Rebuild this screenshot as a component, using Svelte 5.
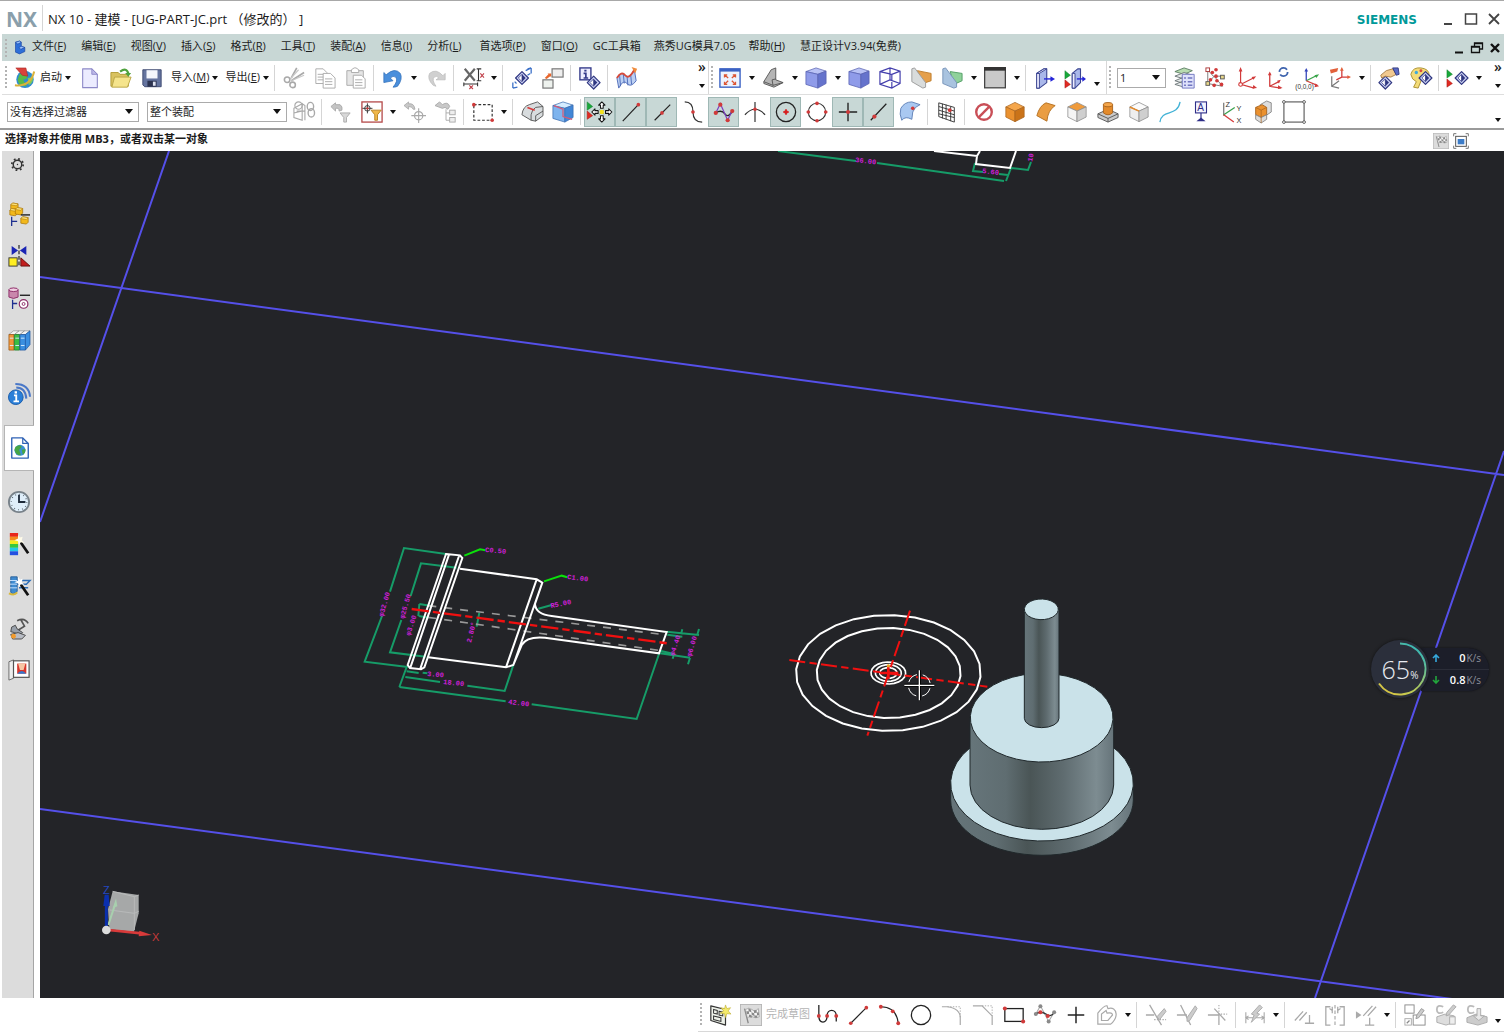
<script>
  const G = '#a9a9a9';
  const line = (d, c = '#333', w = 1.3, extra = '') =>
    `<path d="${d}" fill="none" stroke="${c}" stroke-width="${w}" ${extra}/>`;
  const fill = (d, f, s = 'none', w = 1) => `<path d="${d}" fill="${f}" stroke="${s}" stroke-width="${w}" stroke-linejoin="round"/>`;
  const dot = (x, y, r = 2, c = '#d03a3a') => `<circle cx="${x}" cy="${y}" r="${r}" fill="${c}"/>`;
  const dots = (list, r = 2, c = '#d03a3a') => list.map(([x, y]) => dot(x, y, r, c)).join('');
  const iso = (t, l, r, s) =>
    fill('M12 1.500 22 6.500 12 11 2 6.500z', t, s, 0.8) + fill('M2 6.500 12 11v11.500l-10-5z', l, s, 0.8) + fill('M22 6.500 12 11v11.500l10-5z', r, s, 0.8);
  const block = (t, l, r, s) =>
    fill('M1 5 12 1l11 3.500L14 8z', t, s, 0.8) + fill('M1 5l13 3v15L1 19z', l, s, 0.8) + fill('M14 8l9-3.500V18l-9 5z', r, s, 0.8);
  const diamond = (x, y, c = '#2f3680') =>
    fill(`M${x} ${y - 7}l7 7-7 7-7-7z`, '#c9cff2', c, 1.3) + fill(`M${x} ${y - 4}v8l-4-4z`, '#fff', c, 0.8) + fill(`M${x} ${y - 4}v8l4-4z`, c);
  const play = (x, y) => fill(`M${x} ${y}l6 5-6 4z`, '#19a83a', '#0b7a25', 0.5) + fill(`M${x} ${y + 10}l6 5-6 4z`, '#e02a22', '#a01010', 0.5);
  const flag = '<rect x=".5" y=".5" width="23" height="23" fill="#dcdcdc" stroke="#b5b5b5"/>' +
    line('M5 5l4 16', '#888', 1.4) + fill('M6 6q4-3 7 0t7-1l1 9q-4 2-7 0t-6 1z', '#f6f6f6', '#999', 0.8) +
    fill('M9 5l3 1 .5 3-3-1zM15 7l3-.5.4 3-3 .3zM7 8l2.500-.4.6 3-2.500.6zM12.500 9l3 1 .3 3-3-1zM18.400 9.400l2-.5.4 3-2.200.6zM9.500 11.500l3 .5.5 3-3-.5zM15.500 12.500l3 0 .5 2.500-3 0z', '#888');
  const axes = (c = '#d23b3b') =>
    line('M5 3v16l15 4M5 19l14-7', c, 1.3) + fill('M5 0l2 5H3zM23 23l-5 .5 1-4zM22 10l-3 4-2-3z', c);

  const icons = {
    part: fill('M6 3l7-2 3 2v7l6 2v7l-9 4-7-3z', '#2e6fd8', '#123c9a') + fill('M6 3l7-2 3 2-6 3zM12 12l4-2 6 2-7 3z', '#9cc4ff', '#123c9a'),
    launch: '<circle cx="12" cy="13.500" r="9.500" fill="#2f8bd0"/>' + fill('M6 8q6-3 8 1t-4 5l4 7q-9 1-10-7z', '#57b948') + fill('M15 12l6-1q0 7-5 9z', '#7dc95a') +
      line('M1 20Q18 22 22 5', '#d9b23c', 2.2) + fill('M2 1l11 0 2 9L9 9z', '#d8413b', '#a82220', 0.6),
    new: fill('M4 2h10l6 6v14.500H4z', '#ececff', '#8d89c8', 1.2) + fill('M14 2v6h6z', '#bdb9e8', '#8d89c8'),
    open: fill('M1 6h8l2 2h9v13H1z', '#d9c260', '#b09a35') + fill('M5 11h18l-4 11H2z', '#f5e48c', '#b9a545') + line('M11 5q7-5 9 2', '#4fa23e', 2.4) + fill('M16.500 6.500h6.500l-3 4z', '#4fa23e'),
    save: fill('M2 3h20v18.500H4l-2-2z', '#65749f', '#3b466e') + '<rect x="6" y="3.500" width="12" height="9" fill="#f4f6fc"/><rect x="7" y="15" width="10" height="6.500" fill="#2c3350"/><rect x="13" y="16" width="3" height="4.500" fill="#dfe3f2"/>',
    cut: line('M9 15 23 6M9 12 15 1', G, 1.8) + line('M9 15 23 9M8 13 17 3', '#c9c9c9', 1.4) + `<circle cx="4.500" cy="14" r="3" fill="none" stroke="${G}" stroke-width="1.700"/><circle cx="10.500" cy="19.500" r="3" fill="none" stroke="${G}" stroke-width="1.700"/>`,
    copy: fill('M2 2h8l4 4v12H2z', '#fff', G) + line('M4 8h7M4 11h7M4 14h7', G, 1) + fill('M10 7h8l5 5v11H10z', '#fff', G) + line('M12 13h8M12 16h8M12 19h8', G, 1),
    paste: fill('M2 4h18v16H2z', '#e6e6e6', G) + fill('M7 6V3l3-2h2l3 2v3z', '#fff', G) + fill('M9 9h9l4 4v10H9z', '#fff', G) + line('M11 14h8M11 17h8M11 20h8', G, 1),
    undo: fill('M2 6l2.500 2.500Q14 0 20 7q3 6-3 14-2 1-5 1 6-7 3-11-3-2-6 1l3 3L2 17z', '#4a8fdc', '#2e6db8', 0.8),
    redo: fill('M22 7l-2.500 2.500Q12 1 5 7q-3 6 4 13l3 1q-5-7-2-10 3-2 5 1l-3 2h10z', '#d0d0d0', '#bbb', 0.8),
    expr: line('M3 2l11 13M14 2 3 15', '#666', 2.4) + line('M2 17v4M17 17v4M2 18.500h15M18 2v13M16 2h5M16 15h5', '#333', 1.2) + line('M20 7l4 4.500M24 7l-4 4.500M8 20l4 4M12 20l-4 4', '#c0404a', 1.2),
    rotate: diamond(12, 12) + line('M16 4l6-3M22 1v6M22 1l-4 1M2 23v-6M2 23l5-1M18 9l3-2M4 16l2 2', '#3b70c8', 1.4),
    boxes: '<rect x="11" y="2" width="12" height="9" fill="#eee" stroke="#777" stroke-width="1.300"/><rect x="1" y="14" width="11" height="9" fill="#eef2ee" stroke="#777" stroke-width="1.300"/>' + fill('M3 12l4-4-1-1h4v4l-1-1-4 3z', '#e8662c'),
    info: '<rect x="1" y="1" width="12" height="13" fill="#eef" stroke="#343a8a" stroke-width="1.500"/>' + line('M7 3v2', '#343a8a', 2.4) + line('M5 7h2.500v5M5 12h5', '#343a8a', 1.8) + diamond(16, 17),
    spring: fill('M1 12q5-8 9-3t10-6l2 12q-6 8-10 3t-9 5z', '#bcd0f3', '#4b69b8') + line('M4 10l1 11M8 8l1 10M12 10l1 10M16 8l1 11', '#4b69b8', 1) + line('M1 12q5-8 9-3t10-6', '#d64a3a', 2) + fill('M17 0l6 2-2 5z', '#ef8c3d'),
    fit: '<rect x="1" y="2" width="22" height="20" fill="#eef3ff" stroke="#3b62c4" stroke-width="1.500"/><rect x="1" y="2" width="22" height="3" fill="#3b62c4"/>' + line('M10 12 6 8.500m0 3v-3h3M14 12l4-3.500m-3 0h3v3M10 15l-4 4m0-3v3h3M14 15l4 4m-3 0h3v-3', '#dd5533', 1.4),
    clipv: fill('M2 16 10 3l5-2v13l8 3-10 5-11-4z', '#b5b5b5', '#555') + line('M2 16l10 4 11-3M12 20l-1-6 4-1', '#555', 1),
    blue: block('#b9c2f5', '#8f9be9', '#6573cc', '#5660b0'),
    wire: line('M1 5 12 1l11 3.500V18l-9 5L1 19zM1 5l13 3v15M14 8l9-3.500M12 1v13L1 19M12 14l11 4', '#4540ad', 1.3),
    plane1: fill('M8 4l15 3v8l-12 4z', '#e5a04c', '#bd7b28') + fill('M2 2l3-1 12 16v5l-3 1L2 16z', '#d9dcdc', '#999'),
    plane2: fill('M10 5l13 2v8l-9 4z', '#8fd19a', '#4f9c63') + fill('M2 2l3-1 12 16v5l-3 1L2 18z', '#a9c3df', '#7592b8'),
    screen: '<rect x=".7" y="1.700" width="22.600" height="21" fill="#c9c9c9" stroke="#444" stroke-width="1.400"/><rect x="0" y="0" width="24" height="4" fill="#333"/>',
    slide: fill('M4 7 12 2h3v15l-8 6H4z', '#aab8ea', '#3a4490', 1.2) + fill('M4 7h3v16H4zM4 7l8-5h3L7 7z', '#eef', '#3a4490', 1) + line('M12 13h8', '#2424d8', 1.5) + fill('M19 10l5 3-5 3z', '#2424d8'),
    slidep: fill('M9 7 15 2h3v15l-6 6H9z', '#aab8ea', '#3a4490', 1.2) + fill('M9 7h3v16H9z', '#eef', '#3a4490', 1) + line('M14 13h7', '#2424d8', 1.5) + fill('M20 10l4 3-4 3z', '#2424d8') + play(1, 4),
    layers: fill('M1 5l10-4 9 3-9 4z', '#b8dcb0', '#5b7d63') + fill('M1 10l10-4 9 3-9 4zM1 15l10-4 9 3-9 4zM1 19l10-4 9 3-9 4z', '#e6eaea', '#6c7678') + fill('M9 8h13v15H9z', '#dfe2fb', '#6f74c0') + line('M11 12h2M15 12h5M11 16h2M15 16h5M11 20h2M15 20h5', '#6f74c0', 1.6),
    molec: line('M3 3v15l16 3M3 3l6 7 9 0M3 18l7-8 9 11', '#777', 1) + dots([[8, 6], [12, 10], [6, 14], [13, 15], [18, 19], [10, 20], [12, 3]], 2) + '<rect x="1" y="1" width="4" height="4" fill="#fff" stroke="#a33"/><rect x="1" y="16" width="4" height="4" fill="#e9d88a" stroke="#555"/><rect x="17" y="9" width="4" height="4" fill="#e9d88a" stroke="#555"/>',
    csys: axes() + '<circle cx="5" cy="19" r="2" fill="#fff" stroke="#d23b3b" stroke-width="1.200"/>',
    csysr: line('M3 7v14l12 2M3 21l10-5', '#d23b3b', 1.4) + fill('M3 5l2 4H1zM17 23l-5 1v-4zM15 14l-2 4-2-3z', '#d23b3b') + '<circle cx="18" cy="5.500" r="4.500" fill="none" stroke="#3c62ad" stroke-width="2" stroke-dasharray="11 3"/>',
    csyso: line('M9 4v11', '#3344bb', 1.4) + line('M9 15l12-6', '#3aa44a', 1.4) + line('M9 15l12 5', '#d23b3b', 1.4) + fill('M9 1l2 4H7z', '#3344bb') + fill('M23 8l-3 4-2-3z', '#3aa44a') + fill('M23 21l-5 1 1-4z', '#d23b3b') + '<text x="-3" y="24" font-size="7" font-family="Liberation Sans, sans-serif" fill="#333">(0,0,0)</text>',
    csysd: line('M14 3v8l8 0M14 11l-6 3', '#d23b3b', 1.4) + fill('M14 0l2 4h-4zM24 11l-4 2V9zM1 3l9-2-1 4-7 2z', '#e2603a') + line('M3 10v11l8 2M3 21l8-6', '#777', 1.3),
    hand: diamond(8, 17) + fill('M3 9l6-5 7-2 4 6-6 3-6-1-4 2z', '#f1c98f', '#a57c45') + fill('M16 1l6 0 1 7-3 1z', '#5a6bc5', '#333a80'),
    palette: fill('M2 8q2-8 11-7t9 8q-2 5-8 4l-4 10-5-1 3-6-4-3z', '#f4dc78', '#a88d2f') + dot(8, 6, 1.8, '#3fa9dd') + dot(13, 4, 1.6, '#d94c3c') + diamond(18, 12),
    playd: play(1, 3) + diamond(17, 12),
    wcs: line('M1 8l9-5v18l-9-3zM1 13l9-2M10 3l3 2v16M13 11h-9', G, 1.2) + `<circle cx="6" cy="5" r="4" fill="none" stroke="${G}" stroke-width="1.200"/><ellipse cx="19" cy="6" rx="3.500" ry="4.500" fill="none" stroke="${G}" stroke-width="1.500"/><ellipse cx="20" cy="13" rx="3.500" ry="4.500" fill="none" stroke="${G}" stroke-width="1.500"/>`,
    filt1: fill('M1 6l5-4v2h5q3 2 2 6l-3 1q0-4-4-3v3z', '#c4c4c4', '#aaa') + fill('M11 13h11l-4 5v5h-3v-5z', '#d8d8d8', '#aaa'),
    filt2: '<rect x="1" y="1" width="22" height="22" fill="#fff" stroke="#b34646" stroke-width="1.400"/><circle cx="7" cy="8" r="3" fill="none" stroke="#333"/>' + line('M7 2.500v11M1.500 8h11', '#333', 1) + dot(7, 8, 1.3) + fill('M11 10h11l-4 5v6h-3v-6z', '#f0b84a', '#b98120'),
    filt3: fill('M0 5l5-4v2q6-1 7 6h-2q-1-3-5-3v3z', '#c8c8c8', '#999', 0.7) + `<circle cx="16" cy="16" r="4.500" fill="none" stroke="${G}" stroke-width="1.300"/>` + line('M16 8v16M8 16h16', G, 1.2),
    filt4: fill('M0 5l5-4 3 3q6-4 8 2l-2 3-3-2-3 1z', '#c8c8c8', '#aaa') + '<rect x="16" y="10" width="6" height="5" fill="#eee" stroke="#aaa"/><rect x="16" y="18" width="6" height="5" fill="#eee" stroke="#aaa"/>' + line('M12 9v12h4M12 13h4', G, 1),
    rect: '<rect x="2" y="4" width="20" height="17" fill="none" stroke="#333" stroke-width="1.300" stroke-dasharray="3 2"/>' + dots([[2, 4], [22, 21]], 2),
    solid1: fill('M1 15Q2 6 9 4l9-3 6 5v10l-8 6-5-1z', '#d8dcde', '#555') + line('M11 21v-6q1-6 5-8l8-1M16 22v-6l8-5', '#555', 1) + line('M7 7l8 3', '#d63a3a', 1.8),
    solid2: block('#d5ecff', '#7eb4ee', '#4286d6', '#3a6cb0') + line('M2 5l10 4v8l10 3', '#d45a78', 1.4),
    move: play(-2, 1) + line('M11.500 9.500l5 5M16.500 9.500l-5 5', '#555', 1, 'stroke-dasharray="1 1"') +
      fill('M14 1l3.500 3.500h-2V8h-3V4.500h-2zM14 23l-3.500-3.500h2V16h3v3.500h2zM3 12l3.500-3.500v2H10v3H6.500v2zM25 12l-3.500-3.500v2H18v3h3.500v2z', '#fff', '#111', 1.1) + dot(14, 12, 2.4, '#f4e21c'),
    seg: line('M3 22 20 4', '#222', 1.3) + dot(20, 4),
    mid: line('M4 21 21 4', '#222', 1.3) + dot(12, 13),
    scurve: line('M3 1q9 0 9 11t10 11', '#333', 1.3) + dot(12, 12),
    spline: line('M3 13q6-4 10 1t8-3', '#222', 1.5) + line('M3 13 8 3l8 18 5-11', '#7c3fc0', 1.3) + dots([[3, 13], [8, 4], [16, 21], [21, 11]], 2.3),
    tang: line('M1 15q11-12 22 0M12 1v22', '#333', 1.3) + dot(12, 9),
    center: '<circle cx="12" cy="12" r="10.500" fill="none" stroke="#222" stroke-width="1.400"/>' + fill('M12 9l1 2 2 1-2 1-1 2-1-2-2-1 2-1z', '#d62020', '#d62020'),
    quad: '<circle cx="12" cy="12" r="9.500" fill="none" stroke="#333" stroke-width="1.200"/>' + dots([[12, 2.5], [12, 21.5], [2.5, 12], [21.5, 12]], 2),
    cross: line('M12 2v20M2 12h20', '#222', 1.5) + dot(12, 12, 2.2),
    oncurve: line('M3 21 20 3', '#222', 1.3) + dot(7, 17, 2.3),
    face: fill('M2 8Q6 1 14 1l9 3q-6 2-8 8l-1 8Q7 16 3 21q-3-7-1-13z', '#a9c8f1', '#5d7fb6') + dot(15, 8),
    grid: fill('M3 2l17 5v16L3 17z', '#fff', '#333') + line('M7 3v16M11 4v16M16 6v16M3 6l17 5M3 10l17 5M3 14l17 4', '#333', 1) + dot(15, 10),
    no: '<circle cx="12" cy="12" r="8.500" fill="#fff" stroke="#c94f57" stroke-width="2.600"/>' + line('M6.500 17.500l11-11', '#c94f57', 2.6),
    orange: iso('#f5a64b', '#ea912f', '#ca7319', '#a9641e'),
    sheet: fill('M2 16Q5 5 12 2l10 3q-8 5-9 17z', '#ea9d42', '#b47021'),
    otop: iso('#ef9b3c', '#f4f4f4', '#cfcfcf', '#888'),
    boss: fill('M1 14l11-5 11 5v4l-11 5-11-5z', '#c9c9c9', '#555') + line('M1 14l11 5 11-5M12 19v4', '#555', 1) + fill('M7 4v9q5 4 10 0V4z', '#e38a2b', '#a9641e') + '<ellipse cx="12" cy="4" rx="5" ry="2.300" fill="#f5a64b" stroke="#a9641e"/>',
    gray: iso('#fbfbfb', '#eee', '#cfcfcf', '#888') + line('M2 6.500 12 11', '#e38a2b', 1.6),
    curve: line('M1 23C3 8 20 18 23 1', '#42b2d6', 1.4),
    note: '<rect x="6" y="1" width="12" height="12" fill="#f4f4ff" stroke="#2e2e88" stroke-width="1.200"/><text x="8" y="11" font-size="11" font-family="Liberation Sans, sans-serif" fill="#2e2e88">A</text>' + line('M12 13v6', '#2e2e88', 1.3) + fill('M12 18l5 4H7z', '#2e2e88'),
    xyz: line('M3 2v14', '#666', 1.2) + line('M3 15l12-8', '#38a04c', 1.4) + line('M3 15l11 8', '#d63a3a', 1.4) + '<g font-family="Liberation Sans, sans-serif" font-size="8" fill="#333"><text x="5" y="7">Z</text><text x="17" y="11">Y</text><text x="17" y="24">X</text></g>',
    bodies: fill('M9 4l7-4 5 2v10l-6 4z', '#ddd', '#888') + fill('M4 7l7-3 5 3v8l-6 3-6-3z', '#ea912f', '#a9641e') + fill('M4 15l6 3 6-3v5l-6 4-6-4z', '#ddd', '#888') + line('M4 7l6 3 6-3M10 10v14', '#a9641e', 0.8),
    frame: '<rect x="1" y="1" width="22" height="22" fill="#fff" stroke="#555" stroke-width="1.200"/>' + [[1, 1], [23, 1], [1, 23], [23, 23]].map(([x, y]) => `<circle cx="${x}" cy="${y}" r="1.500" fill="#fff" stroke="#555"/>`).join(''),
    flag,
    fullscr: line('M5 1H1v4M19 1h4v4M5 23H1v-4M19 23h4v-4', '#777', 1.5) + '<rect x="4" y="5" width="16" height="15" fill="#fff" stroke="#555" stroke-width="1.500"/><rect x="7" y="9" width="10" height="8" fill="#3c7cc8"/>',
    gear: '<circle cx="12" cy="12" r="6" fill="none" stroke="#333" stroke-width="2"/><circle cx="12" cy="12" r="8" fill="none" stroke="#333" stroke-width="2.400" stroke-dasharray="2.500 3.780"/>' + dot(12, 12, 1, '#333'),
    asm: [[3, 2], [2, 8], [8, 7], [14, 17]].map(([x, y]) => fill(`M${x} ${y}l2-2 6 1v5l-2 2-6-1z`, '#f2b81c', '#a87508', 0.8) + fill(`M${x} ${y}l2-2 6 1-2 2z`, '#fde27a', '#a87508', 0.6)).join('') + line('M4 15v10M4 20h6', '#1e2f90', 1.4) + line('M14 13h10', '#111', 1.4),
    mirror: fill('M4 1l7 5-7 5zM20 1l-7 5 7 5z', '#1b25b4') + line('M12 0v24', '#222', 1.3, 'stroke-dasharray="4 2"') + '<rect x="1" y="14" width="9" height="9" fill="#ffee22" stroke="#333"/>' + fill('M14 14v9h10z', '#c21d1d', '#611', 1),
    hist: fill('M1 3q5-3 10 0v8q-5 3-10 0z', '#c987ac', '#8b2a66') + '<ellipse cx="6" cy="3" rx="5" ry="2" fill="#f1cfe2" stroke="#8b2a66"/>' + line('M13 9h11', '#111', 1.4) + line('M5 14v10M5 18h5', '#1e2f90', 1.4) + '<circle cx="17" cy="18.500" r="4.700" fill="#fff" stroke="#8b2a66" stroke-width="1.300"/><circle cx="17" cy="18.500" r="1.600" fill="none" stroke="#8b2a66"/>',
    books: fill('M6 2h18l-5 4H1z', '#f4f4f4', '#777', 0.6) + fill('M1 6h5.500v17H1z', '#f0943a', '#9a5a1a', 0.8) + fill('M7 6h5.500v17H7z', '#3bbd44', '#1b7a25', 0.8) + fill('M13 6h6l5-4v15l-5 6h-6z', '#3b8fe0', '#1d55a0', 0.8) + line('M19 6v17', '#1d55a0', 0.8) + line('M2 10h4M2 18h4M8 10h4M8 18h4M14 10h4M14 18h4', '#d8ecff', 1) + line('M7 6l5-4M13 6l5-4', '#777', 0.8),
    web: '<circle cx="8.500" cy="15.500" r="8" fill="#2a7fd8" stroke="#1559a8"/>' + line('M8.500 9v2.500', '#fff', 2.6) + line('M6.500 13.500h2.500v6M6 20h6', '#fff', 2) + line('M9 5q10 0 11 12M8 1q15 0 16 14', '#4a78c8', 2.2),
    page: fill('M3 1h12l6 6v16H3z', '#fff', '#2f62b5', 1.5) + line('M15 1v6h6', '#2f62b5', 1.3) + '<circle cx="12" cy="14.500" r="6" fill="#3a8fd0"/>' + fill('M7 11q5-4 7 0l-3 3 2 6q-6 0-7-6zM14 14l4-1q0 5-3 6z', '#46a544'),
    clock: '<circle cx="12" cy="12" r="11" fill="#dfeefa" stroke="#78828a" stroke-width="2"/><circle cx="12" cy="12" r="8.500" fill="none" stroke="#55606a" stroke-width="1.200" stroke-dasharray="1 3.450"/>' + line('M12 4v8h7', '#1d2a3a', 2),
    wand: [['#e8261c', 0], ['#f58a1c', 4], ['#f4ea22', 8], ['#39c83c', 12], ['#22c8e8', 16], ['#2450e0', 20]].map(([c, y]) => `<rect x="2" y="${y}" width="9" height="4.200" fill="${c}"/>`).join('') + line('M13 9l9 13', '#111', 3) + fill('M11 2l2 3 3-1-1 4 3 3-4-1-2 3-1-4-4-1 4-2z', '#fffbe8'),
    wand2: fill('M3 2h7v16q-4 4-7 1z', '#3f8bd0', '#2a5f98') + line('M2 6h8M2 10h8M2 14h8', '#cfe6ff', 1) + line('M10 6h14l-4 4H10M12 14h10', '#2f6fb8', 1.6) + line('M1 20q6 3 9-1', '#d8b93c', 2) + line('M13 9l9 13', '#111', 3) + fill('M11 2l2 3 3-1-1 4 3 3-4-1-2 3-1-4-4-1 4-2z', '#fff'),
    robot: line('M10 4q8-4 12 3M14 3l4 7-8 5', '#555', 1.8) + fill('M4 11l4-2 2 4 6 4-3 3-6-3-4-1z', '#98a0aa', '#444') + fill('M3 19l8-2 8 3-4 4H5z', '#b8bcc4', '#444') + dot(6, 21, 2.6, '#f29b2c'),
    roles: fill('M1 3l5-2v20l-5 2z', '#eee', '#666') + '<rect x="6" y="2" width="17" height="18" fill="#fff" stroke="#555" stroke-width="1.300"/><rect x="10" y="5" width="10" height="11" fill="#d8362c"/>' + fill('M11 5h8l-2 7h-4z', '#f6c6a4') + fill('M10 16q5-6 10 0z', '#3477cc'),
    sketch: fill('M2 2l16 4v17L2 18z', '#eef2ea', '#333', 1.3) + line('M5 6l4 1v4L5 10zM11 8l4 1v4l-4-1zM5 13l8 2v4l-8-2z', '#333', 1.1) + fill('M18 1l1.500 4 4-1-2.500 3.500 3 3.500-4.500-.5L18 15l-1-4.500-5-.5 4-2.500L13 4l4 1z', '#f4ea6a', '#b9a92c', 0.6),
    profile: line('M2 1v12c0 9 9 9 9 0 0-8 10-8 10 0v6', '#222', 1.4) + dots([[2, 13], [11, 13], [21, 13]], 2.1),
    line: line('M3 21 20 4', '#222', 1.3) + dots([[3, 21], [20, 4]]),
    arc: line('M2 3q17 0 19 18', '#222', 1.3) + dots([[2, 3], [15, 8], [21, 21]], 2.1),
    circle: '<circle cx="12" cy="12" r="10.500" fill="none" stroke="#222" stroke-width="1.400"/>',
    fillet: line('M1 3h6q14 2 14 12v8', G, 1.3) + line('M7 3h14v12', G, 1, 'stroke-dasharray="1.500 1.500"'),
    chamfer: line('M1 2h10l11 11v10', G, 1.3) + line('M11 2h11v11', G, 1, 'stroke-dasharray="1.500 1.500"'),
    rectsk: '<rect x="2" y="5" width="20" height="14" fill="none" stroke="#222" stroke-width="1.400"/>' + dots([[2, 5], [22, 19]], 2.2),
    poly: line('M2 11 7 2l9 17 6-10', G, 1.2) + line('M2 11q5-4 11 0t9-2', '#333', 1.4) + dots([[2, 11], [7, 2.5], [16, 19], [22, 9]], 2.2, '#8a8a8a') + dots([[7, 9], [15, 13]], 2.2),
    plus: line('M12 3v18M3 12h18', '#222', 1.6),
    offset: line('M2 22V10q7-9 10-8l1 3q8-2 9 6 0 6-6 11zM6 18v-7l5-4 1 3q6-1 6 2l-5 6z', G, 1.3),
    trim: line('M5 1l13 22M1 12h9', G, 1.4) + line('M10 17h13', G, 1.2, 'stroke-dasharray="1.500 1.500"') + fill('M21 5l2 3-7 9-3-3z', '#ccc', '#aaa'),
    extend: line('M1 12h11M5 1l11 22', G, 1.4) + fill('M21 2l2 3-8 13-3 1 0-4z', '#ccc', '#aaa'),
    corner: line('M1 12h12v11M8 5l12 13', G, 1.4) + line('M13 1v10h9', G, 1.2, 'stroke-dasharray="1.500 1.500"'),
    dim: line('M2 9v12M22 9v12M2 15h20M5 13l-3 2 3 2M19 13l3 2-3 2', G, 1.2) + fill('M17 1l3 3-6 6 3 1-9 9 3-8-3-1z', '#ccc', '#aaa'),
    para: line('M2 18 11 8M7 18l8-9M13 21h10M18 12v9', G, 1.4),
    sym: line('M7 3H2v20h5M17 3h5v20h-5M9 3v7M15 3v7M9 7l-3-2M15 7l3-2', G, 1.4) + line('M12 1v22', G, 1.3, 'stroke-dasharray="4 2"'),
    autoc: fill('M1 8l6 4-6 4z', '#aaa') + line('M9 13 19 2M14 13 23 3M11 23h10M16 15v8', G, 1.4),
    conv: '<rect x="1" y="1" width="10" height="9" fill="#fff" stroke="#888"/><rect x="10" y="12" width="13" height="11" fill="#fff" stroke="#888"/><rect x="1" y="16" width="7" height="7" fill="#fff" stroke="#aaa"/>' + fill('M19 5l3 2-6 8-3 1 1-4z', '#ccc', '#999') + line('M3 21l3-3', '#888'),
    upd1: line('M9 3q-7-3-7 3t7 3', '#bbb', 2) + fill('M2 14l9-3 10 2v7l-9 3-10-3z', '#ddd', '#aaa') + fill('M20 1l3 2-8 9-3 1 1-4z', '#ccc', '#aaa') + '<rect x="16" y="14" width="6" height="8" fill="#eee" stroke="#aaa"/>',
    upd2: line('M9 3q-7-3-7 3t7 3', '#bbb', 2) + fill('M1 15l10-4 12 3v6l-10 3-12-3z', '#ccc', '#aaa') + fill('M12 5h4v8h4l-6 5-6-5h4z', '#e8e8e8', '#aaa')
  };

  const menus = [
    ['文件', 'F'], ['编辑', 'E'], ['视图', 'V'], ['插入', 'S'], ['格式', 'R'], ['工具', 'T'], ['装配', 'A'], ['信息', 'I'],
    ['分析', 'L'], ['首选项', 'P', 'wide'], ['窗口', 'O'], ['GC工具箱'], ['燕秀UG模具7.05'], ['帮助', 'H'], ['慧正设计V3.94(免费)']
  ];
  const std = ['launch', { t: '启动' }, 'v', 'new', 'open', 'save', { t: '导入', k: 'M' }, 'v', { t: '导出', k: 'E' }, 'v', '|', 'cut', 'copy', 'paste', '|', 'undo', 'v', 'redo', '|', 'expr', 'v', '|', 'rotate', 'boxes', '|', 'info', '|', 'spring'];
  const view = ['fit', 'v', 'clipv', 'v', 'blue', 'v', 'blue', 'wire', 'plane1', 'plane2', 'v', 'screen', 'v', '|', 'slide', 'slidep'];
  const util = ['layers', 'molec', 'csys', 'csysr', 'csyso', 'csysd', 'v', '|', 'hand', 'palette', '|', 'playd', 'v'];
  const sel = ['wcs', '|', 'filt1', 'filt2', 'v', 'filt3', 'filt4', '|', 'rect', 'v', '|', 'solid1', 'solid2', '|', '*move', '*seg', '*mid', 'scurve', '*spline', 'tang', '*center', 'quad', '*cross', '*oncurve', 'face', '|', 'grid', '|', 'no', 'orange', 'sheet', 'otop', 'boss', 'gray', 'curve', 'note', 'xyz', 'bodies', 'frame'];
  const sk1 = ['sketch', 'flag', { t: '完成草图', off: true }, 'profile', 'line', 'arc', 'circle', 'fillet', 'chamfer', 'rectsk', 'poly', 'plus', 'offset', 'v', '|', 'trim', 'extend', 'corner', '|', 'dim', 'v', '|', 'para', 'sym', 'autoc', 'v', '|', 'conv', 'upd1', 'upd2'];
  const side = [['asm', 'mirror', 'hist', 'books'], ['web'], ['page'], ['clock', 'wand', 'wand2', 'robot', 'roles']];

  const ring = (cx, cy, rx, ry, n) =>
    Array.from({ length: n }, (_, i) => {
      const a = (2 * Math.PI * (i + 0.3)) / n;
      return `${(cx + rx * Math.cos(a)).toFixed(1)},${(cy + ry * Math.sin(a)).toFixed(1)}`;
    }).join(' ');

  const dims = [
    ['C0.50', 485, 552, 5], ['C1.00', 567, 579, 7], ['R5.00', 551, 608, -11], ['φ32.00', 383, 617, -74], ['φ25.50', 404, 619, -74],
    ['φ3.00', 410, 636, -72], ['2.80°', 471, 643, -76], ['3.00', 427, 676, 5], ['18.00', 443, 684, 6], ['42.00', 508, 704, 7],
    ['φ4.40', 674, 656, -72], ['φ6.00', 691, 657, -74], ['36.00', 855, 162, 7], ['5.60', 982, 173, 7], ['10', 1032, 162, -78]
  ];
</script>

{#snippet icon(name)}
  <svg class="ic" viewBox="0 0 24 24" aria-hidden="true">{@html icons[name]}</svg>
{/snippet}

{#snippet bar(items)}
  {#each items as it}
    {#if it === '|'}
      <span class="sep"></span>
    {:else if it === 'v'}
      <button class="drop" aria-label="更多"><i class="tri"></i></button>
    {:else if it.t}
      <button class="label" class:off={it.off} class:keyed={it.k}>{it.t}{#if it.k}(<u>{it.k}</u>){/if}</button>
    {:else}
      <button class="tool" class:on={it[0] === '*'} aria-label={it.replace('*', '')}>{@render icon(it.replace('*', ''))}</button>
    {/if}
  {/each}
{/snippet}

{#snippet overflow(both)}
  <button class="overflow" aria-label="工具条选项">{#if both}<span>»</span>{/if}<i class="tri"></i></button>
{/snippet}

{#snippet combo(label, value, cls)}
  <label class="combo {cls}">
    <select aria-label={label}><option>{value}</option></select>
    <i class="tri big"></i>
  </label>
{/snippet}

<div class="app">
  <header class="title">
    <span class="nx">NX</span>
    <h1>NX 10 - 建模 - [UG-PART-JC.prt （修改的） ]</h1>
    <span class="brand">SIEMENS</span>
    <div class="win">
      <button aria-label="最小化"><svg viewBox="0 0 14 14"><path d="M3 12h8" stroke="#444" stroke-width="2" /></svg></button>
      <button aria-label="最大化"><svg viewBox="0 0 14 14"><path d="M1.500 2h11v10h-11z" fill="none" stroke="#444" stroke-width="1.500" /></svg></button>
      <button aria-label="关闭"><svg viewBox="0 0 14 14"><path d="M2 2l10 10M12 2 2 12" stroke="#444" stroke-width="1.800" /></svg></button>
    </div>
  </header>

  <nav class="menu">
    <span class="grip"></span>
    <span class="particon">{@render icon('part')}</span>
    {#each menus as [t, k, c]}
      <button class={c} class:keyed={k}>{t}{#if k}(<u>{k}</u>){/if}</button>
    {/each}
    <div class="win small">
      <button aria-label="最小化窗口"><svg viewBox="0 0 14 14"><path d="M3 11.500h8" stroke="#111" stroke-width="2" /></svg></button>
      <button aria-label="还原窗口"><svg viewBox="0 0 14 14"><path d="M4.500 5V2h8v6h-3M1.500 5.500h8v6h-8zM4 2.500h9M1 6h9" fill="none" stroke="#111" stroke-width="1.300" /></svg></button>
      <button aria-label="关闭窗口"><svg viewBox="0 0 14 14"><path d="M3 3l8 8M11 3l-8 8" stroke="#111" stroke-width="2.400" /></svg></button>
    </div>
  </nav>

  <div class="row first">
    <div class="group std"><span class="grip"></span>{@render bar(std)}{@render overflow(true)}</div>
    <div class="group"><span class="grip"></span>{@render bar(view)}<button class="drop low" aria-label="工具条选项"><i class="tri"></i></button></div>
    <div class="group"><span class="grip"></span>{@render combo('工作图层', '1', 'layer')}{@render bar(util)}{@render overflow(true)}</div>
  </div>

  <div class="row second">
    {@render combo('类型过滤器', '没有选择过滤器', 'type')}
    {@render combo('选择范围', '整个装配', 'scope')}
    {@render bar(sel)}
    {@render overflow(false)}
  </div>

  <div class="status">
    <strong>选择对象并使用 MB3，或者双击某一对象</strong>
    <button aria-label="完成">{@render icon('flag')}</button>
    <button aria-label="全屏">{@render icon('fullscr')}</button>
  </div>

  <main>
    <aside>
      <button class="gear" aria-label="设置">{@render icon('gear')}</button>
      {#each side as set}
        <div class="set">
          {#each set as s}
            <button class:active={s === 'page'} aria-label={s}>{@render icon(s)}</button>
          {/each}
        </div>
      {/each}
    </aside>

    <section class="canvas">
      <svg class="scene" viewBox="40 151 1464 847" preserveAspectRatio="xMidYMid slice" role="img" aria-label="三维视图">
        <defs>
          <linearGradient id="side">
            <stop offset="0" stop-color="#66757a" /><stop offset=".25" stop-color="#5f6d71" /><stop offset=".42" stop-color="#4a5556" />
            <stop offset=".65" stop-color="#5f6c70" /><stop offset=".88" stop-color="#7d8c91" /><stop offset="1" stop-color="#66747a" />
          </linearGradient>
        </defs>
        <g stroke="#5550ea" stroke-width="2">
          <path d="M169 151 40 522M40 277l1464 198M1504 451l-189 547M40 809l1464 197" fill="none" />
        </g>

        <g fill="none" stroke="#169c68" stroke-width="2">
          <path d="M778 151l78 10M877 163l127 18M975 163l-2 8 10 1M999 174l9 1M1011 168l-5 13M1011 168l17 2 3-8" />
        </g>
        <path d="M934 151l43 5 3-5M977 156l-1 8 34 4 6-17" fill="none" stroke="#fff" stroke-width="2" />

        <g transform="translate(360 530) scale(.33333)" fill="none" stroke-width="6">
          <g stroke="#169c68">
            <path d="M258 72 132 54 90 185M66 258 14 395 143 411M290 113 183 100 152 198M124 270 90 367 197 380M178 222l36 6M176 258l30 5M178 222l-3 36" />
            <path d="M118 471 140 411M118 471 437 514M515 523 830 567 897 372M136 441 240 456M322 467 434 483 460 405M140 424l36 5M188 428l14 2" />
            <path d="M920 305l97 10M1017 297l-6 20M922 314l45 6M967 298l-4 15M900 362l42 10M900 370l90 13M990 383l-6 20M942 372l-4 14M358 248l-8 42M535 236l40-11" />
          </g>
          <g stroke="#999" stroke-width="5">
            <path d="M205 227 920 315" stroke-dasharray="24 24" />
            <path d="M205 262 895 361" stroke-dasharray="24 24" />
          </g>
          <g stroke="#fff">
            <path d="M258 72 300 76 307 84 193 412 183 418 150 414 143 405zM267 74 151 413M297 78 181 416" />
            <path d="M300 116 530 148 547 158 525 222Q527 253 575 258L920 306 897 370 555 323Q500 318 485 345L460 405 438 412 205 382M530 148 438 412M547 158 460 405" />
          </g>
          <path d="M155 237 930 341" stroke="#f01010" stroke-width="7" stroke-dasharray="52 12 22 12" />
          <path d="M313 77 360 58l16 3M552 154l53-17 17 5" stroke="#0be00b" />
        </g>

        <g transform="translate(780 590) scale(.33333)" fill="none" stroke-width="6">
          <g stroke="#fff">
            <polygon points={ring(325, 249, 277, 174, 28)} />
            <polygon points={ring(326, 249, 216, 135, 28)} />
            <polygon points={ring(325, 249, 52, 33, 22)} stroke-width="5" />
            <polygon points={ring(325, 249, 39, 25, 20)} stroke-width="5" />
            <polygon points={ring(325, 249, 26, 16, 16)} stroke-width="5" />
          </g>
          <path d="M28 210 622 290M390 62 262 437" stroke="#f01010" stroke-width="6" stroke-dasharray="48 13 22 13" />
          <circle cx="325" cy="228" r="5" fill="#f0a020" />
          <path d="M300 249h55M325 232v35" stroke="#f01010" stroke-width="8" />
          <g stroke="#000" stroke-width="9"><path d="M373 286h90M418 241v90" /></g>
          <circle cx="418" cy="286" r="33" stroke="#fff" stroke-width="3" stroke-dasharray="34 18" stroke-dashoffset="-9" />
          <path d="M373 286h90M418 241v90" stroke="#fff" stroke-width="4" />

          <g stroke="#20282b" stroke-width="3">
            <path d="M512 580v50a274 166 0 0 0 548 0v-50z" fill="url(#side)" />
            <polygon points={ring(786, 580, 274, 173, 40)} fill="#cae2e9" />
            <path d="M570 383v202a215.500 133 0 0 0 431 0V383z" fill="url(#side)" />
            <polygon points={ring(785, 383, 214, 133, 40)} fill="#cae2e9" />
            <path d="M733 58v327a52 28 0 0 0 104 0V58z" fill="url(#side)" />
            <polygon points={ring(784, 58, 51, 31, 24)} fill="#cae2e9" />
          </g>
        </g>

        <g class="dims">
          {#each dims as [t, x, y, r]}
            <text {x} {y} transform="rotate({r} {x} {y})">{t}</text>
          {/each}
        </g>

        <g transform="translate(0 870) scale(.33333)">
          <path d="M338 64 416 75v55l-14 55-74-7-4-60z" fill="#a6a8a8" />
          <path d="M338 64 403 80v100M416 75l-13 5M330 120l73 10 13-6" fill="none" stroke="#b8baba" stroke-width="3" />
          <path d="M325 165l18-55" stroke="#a8cfae" stroke-width="6" />
          <path d="M338 115l10-30 4 24z" fill="#a8cfae" />
          <path d="M319 178V95" stroke="#0a2fae" stroke-width="9" />
          <path d="M310 108l4-34h12l3 34z" fill="#0a2fae" />
          <path d="M325 180l100 10" stroke="#d83a3a" stroke-width="8" />
          <path d="M418 182l38 13-40 4z" fill="#d83a3a" />
          <circle cx="319" cy="180" r="13" fill="#dcdcdc" />
        </g>
        <text class="axis z" x="103" y="894">Z</text>
        <text class="axis x" x="152" y="941">X</text>
      </svg>

      <div class="meter">
        <div class="rates">
          <p><svg viewBox="0 0 8 8"><path d="M4 8V1M1 4l3-3 3 3" fill="none" stroke="#35a8dc" stroke-width="1.600" /></svg><b>0</b><span>K/s</span></p>
          <p><svg viewBox="0 0 8 8"><path d="M4 0v7M1 4l3 3 3-3" fill="none" stroke="#22a63c" stroke-width="1.600" /></svg><b>0.8</b><span>K/s</span></p>
        </div>
        <div class="dial">
          <svg viewBox="0 0 58 58">
            <defs><linearGradient id="arc" x1="0" y1="1" x2=".6" y2="0"><stop offset="0" stop-color="#e2c23c" /><stop offset=".4" stop-color="#b9cc58" /><stop offset="1" stop-color="#3fb8b0" /></linearGradient></defs>
            <path d="M29 3.500a25.500 25.500 0 1 1-21 40" fill="none" stroke="url(#arc)" stroke-width="2" />
          </svg>
          <span>65</span><small>%</small>
        </div>
      </div>
    </section>
  </main>

  <footer>
    <div class="sketchbar"><span class="grip"></span>{@render bar(sk1)}<button class="drop low" aria-label="工具条选项"><i class="tri"></i></button></div>
  </footer>
</div>

<style>
  :global(body) { margin: 0; background: #fff; }
  .app {
    display: flex; flex-direction: column; height: 100vh; box-sizing: border-box; overflow: hidden;
    border-top: 1px solid #a8a8a8; color: #1c1c1c; background: #fff;
    font: 11px/16px "Open Sans", "Noto Sans CJK SC", sans-serif;
  }
  button { padding: 0; border: 0; background: none; font: inherit; color: inherit; white-space: nowrap; }
  .ic { display: block; width: 22px; height: 22px; overflow: visible; }
  u { text-underline-offset: 1px; }

  .title { flex: none; display: flex; align-items: center; height: 33px; padding-left: 6px; }
  .nx { width: 36px; height: 26px; border-right: 1px solid #d5d5d5; font: bold 21px/28px "Noto Sans", sans-serif; color: #8a9fab; }
  h1 { flex: 1; margin: 0 0 0 5px; font-size: 13px; line-height: 32px; font-weight: 400; padding-top: 3px; }
  .brand { font: bold 12px/16px "DejaVu Sans", sans-serif; color: #099; margin-right: 24px; padding-top: 4px; }
  .win { display: flex; gap: 9px; padding-right: 3px; }
  .win button { display: flex; }
  .win svg { width: 14px; height: 14px; }
  .title .win { padding-top: 3px; }

  .menu { flex: none; display: flex; align-items: center; height: 27px; margin-left: 2px; background: #c8d7d5; }
  .menu .grip { margin-left: 3px; }
  .particon { margin: 0 6px 0 3px; }
  .particon .ic { width: 14px; height: 15px; }
  .menu > button { margin-right: 13px; padding-bottom: 3px; }
  .menu > .keyed { margin-right: 15px; }
  .menu > .wide { margin-left: 3px; }
  .menu .win { margin-left: auto; gap: 4px; padding-right: 2px; }

  .grip { flex: none; width: 2px; height: 24px; margin: 0 2px; background: repeating-linear-gradient(#b3b3b3 0 2px, transparent 2px 4px); }
  .menu .grip { height: 18px; }
  .row { flex: none; display: flex; align-items: center; height: 33px; }
  .first { margin-left: 2px; border-bottom: 1px solid #dedede; }
  .second { border-bottom: 2px solid #9a9a9a; padding-left: 7px; }
  .group { flex: 1; display: flex; align-items: center; align-self: stretch; min-width: 0; }
  .group + .group { border-left: 1px solid #d8d8d8; }
  .std { flex: 0 0 47%; }
  .std > .grip { margin-left: 3px; }
  .tool { flex: none; display: grid; place-items: center; width: 31px; height: 30px; box-sizing: border-box; }
  .on { background: #c8d8d6; border: 1px solid #9fb8b5; }
  .drop { flex: none; width: 12px; height: 24px; display: grid; place-items: center; }
  .low { align-self: end; height: 20px; }
  .tri { width: 0; height: 0; border: 3px solid transparent; border-top: 4px solid #111; border-bottom: 0; }
  .big { border-width: 4px; border-top-width: 5px; border-bottom: 0; }
  .sep { flex: none; width: 1px; height: 26px; margin: 0 3px 0 2px; background: #d5d5d5; }
  .label { flex: none; padding-bottom: 2px; }
  .label.keyed { padding-left: 4px; }
  .off { color: #b4b4b4; padding-right: 2px; }
  .overflow { margin-left: auto; display: flex; flex-direction: column; align-items: center; justify-content: space-between; width: 12px; height: 28px; }
  .overflow span { font: 600 14px/6px "Open Sans", sans-serif; }
  .overflow .tri { margin: auto 0 4px; }

  .combo { flex: none; display: grid; align-items: center; height: 20px; box-sizing: border-box; border: 1px solid #ababab; background: #fff; }
  .combo select { grid-area: 1 / 1; width: 100%; height: 18px; padding: 0 2px; border: 0; appearance: none; background: none; font: inherit; color: inherit; }
  .combo .tri { grid-area: 1 / 1; justify-self: end; margin-right: 5px; pointer-events: none; }
  .type { width: 132px; margin-right: 8px; }
  .scope { width: 140px; margin-right: 1px; }
  .layer { width: 49px; margin: 0 4px; }

  .status { flex: none; display: flex; align-items: center; height: 21px; padding: 0 35px 0 5px; gap: 4px; }
  .status strong { flex: 1; font-weight: 700; line-height: 18px; padding-bottom: 3px; }
  .status .ic { width: 16px; height: 16px; }

  main { flex: 1; display: flex; min-height: 0; }
  aside { flex: none; width: 31px; margin: 0 6px 0 2px; background: #dcdcdc; border-right: 1px solid #a5a5a5; }
  aside button { display: grid; place-items: center; width: 100%; height: 42px; padding-left: 3px; }
  aside .gear { height: 26px; padding: 0; }
  .gear .ic { width: 17px; height: 17px; }
  .set { margin-bottom: 10px; }
  .gear + .set { margin: 16px 0 12px; }
  aside .active { width: 30px; height: 46px; margin-left: 2px; padding: 0; box-sizing: border-box; background: #fff; border: 1px solid #b5b5b5; border-right: 0; }
  .canvas { flex: 1; position: relative; min-width: 0; background: #232428; overflow: hidden; }
  .scene { display: block; width: 100%; height: 100%; }
  .dims text { font: bold 7px "Liberation Mono", monospace; fill: #d01fd8; }
  .axis { font: 11px "Liberation Sans", sans-serif; }
  .z { fill: #2448c0; }
  .x { fill: #c83a3a; }

  .meter { position: absolute; right: 15px; top: 489px; display: flex; align-items: center; }
  .dial { position: relative; display: flex; align-items: baseline; justify-content: center; width: 58px; height: 58px; border-radius: 50%; background: #2b2f3b; box-shadow: 0 0 3px #111; color: #e8eaf0; order: -1; z-index: 1; }
  .dial svg { position: absolute; inset: 0; }
  .dial span { font: 300 25px/58px "Open Sans", sans-serif; }
  .dial small { font-size: 10px; }
  .rates { width: 60px; margin-left: -8px; padding-left: 8px; border-radius: 0 21px 21px 0; background: #1c1e29; box-shadow: 0 0 2px #0c0d12; }
  .rates p { display: flex; align-items: center; height: 21px; margin: 0; padding-right: 8px; }
  .rates p + p { border-top: 1px solid #2b2d38; }
  .rates svg { width: 8px; height: 8px; margin: 0 auto 0 3px; }
  .rates b { font-weight: 600; color: #fff; margin-right: 1px; }
  .rates span { color: #8d909a; font-size: 10px; }

  footer { flex: none; display: flex; height: 34px; }
  .sketchbar { display: flex; align-items: center; margin-left: auto; border-bottom: 1px solid #d8d8d8; }
</style>
